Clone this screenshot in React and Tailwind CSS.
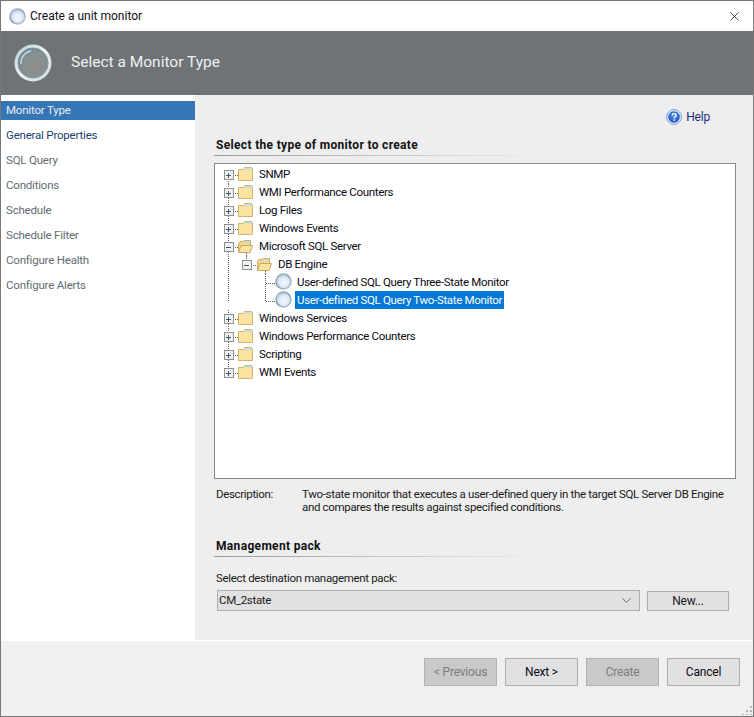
import React from 'react';
import { ChevronDown, X } from 'lucide-react';

const steps = ['General Properties', 'SQL Query', 'Conditions', 'Schedule', 'Schedule Filter', 'Configure Health', 'Configure Alerts'];

function MonitorIcon({ size = 18, id = 'a' }) {
  return (
    <svg width={size} height={size} viewBox="0 0 36 36" className="shrink-0">
      <defs>
        <linearGradient id={`ring-${id}`} x1="0" y1="0" x2="1" y2="1">
          <stop offset="0" stopColor="#9fb6c6" />
          <stop offset="0.5" stopColor="#8aa2b4" />
          <stop offset="1" stopColor="#c3d2dd" />
        </linearGradient>
        <radialGradient id={`core-${id}`} cx="0.55" cy="0.6" r="0.6">
          <stop offset="0" stopColor="#f4f7fc" />
          <stop offset="0.7" stopColor="#dfe9f6" />
          <stop offset="1" stopColor="#b7cde6" />
        </radialGradient>
      </defs>
      <circle cx="18" cy="18" r="17.5" fill={`url(#ring-${id})`} />
      <circle cx="18" cy="18" r="13.5" fill={`url(#core-${id})`} stroke="#dfe8ef" strokeWidth="1" />
    </svg>
  );
}

function HeaderIcon() {
  return (
    <svg width="38" height="38" viewBox="0 0 38 38" className="shrink-0">
      <defs>
        <linearGradient id="hring" x1="0" y1="0" x2="1" y2="1">
          <stop offset="0" stopColor="#b4cbd6" />
          <stop offset="0.5" stopColor="#eef3f5" />
          <stop offset="1" stopColor="#c7d3da" />
        </linearGradient>
        <radialGradient id="hcore" cx="0.62" cy="0.62" r="0.7">
          <stop offset="0" stopColor="#8f8d8c" />
          <stop offset="0.6" stopColor="#87908f" />
          <stop offset="1" stopColor="#6a8796" />
        </radialGradient>
      </defs>
      <circle cx="19" cy="19" r="18.5" fill="url(#hring)" />
      <circle cx="19" cy="19" r="15" fill="url(#hcore)" stroke="#7d929d" strokeWidth="1" />
      <path d="M7 20a12 12 0 0 1 10-13" fill="none" stroke="#c4d6de" strokeWidth="1.4" />
    </svg>
  );
}

function HelpIcon() {
  return (
    <svg width="16" height="16" viewBox="0 0 16 16" className="shrink-0">
      <defs>
        <radialGradient id="help" cx="0.5" cy="0.4" r="0.6">
          <stop offset="0" stopColor="#5b9cf0" />
          <stop offset="1" stopColor="#1f4fb8" />
        </radialGradient>
      </defs>
      <circle cx="8" cy="8" r="7.5" fill="#dbe6f7" stroke="#6f93d4" strokeWidth="0.8" />
      <circle cx="8" cy="8" r="5.8" fill="url(#help)" />
      <path d="M6 6.4c.2-1.2 1.1-1.7 2.1-1.7 1.2 0 2 .7 2 1.7 0 1.4-1.7 1.4-1.8 2.9" fill="none" stroke="#fff" strokeWidth="1.3" />
      <rect x="7.5" y="10.3" width="1.5" height="1.5" fill="#fff" />
    </svg>
  );
}

function Expander({ x, open }) {
  return (
    <g shapeRendering="crispEdges">
      <rect x={x - 4.5} y="4.5" width="9" height="9" fill="#f1f1f1" stroke="#8f8f8f" />
      <rect x={x - 2.5} y="8.5" width="5" height="1" fill="#3a5a80" />
      {!open && <rect x={x - 0.5} y="6.5" width="1" height="5" fill="#3a5a80" />}
    </g>
  );
}

function FolderClosed({ x }) {
  return (
    <g transform={`translate(${x} 0)`}>
      <path d="M0.5 3.5 V14.5 H14.5 V2.5 L13.5 1.5 H6.5 L5.5 3.5 Z" fill="#fbe3a0" stroke="#d6b46c" strokeLinejoin="round" />
      <path d="M7 2.2 H14 V4 H7 Z" fill="#bfe0f2" />
    </g>
  );
}

function FolderOpen({ x }) {
  return (
    <g transform={`translate(${x} 0)`}>
      <path d="M1.5 14.5 V5.5 L3 3.5 H6 L7 2.5 H13.5 V7" fill="#f3d78f" stroke="#c9a866" strokeLinejoin="round" />
      <path d="M8 3 H13 V5 H8 Z" fill="#bfe0f2" />
      <path d="M1.5 14.5 L4 7.5 H15.5 L13 14.5 Z" fill="#fbe3a0" stroke="#c9a866" strokeLinejoin="round" />
    </g>
  );
}

function Dots({ d }) {
  return <path d={d} fill="none" stroke="#5f5f5f" strokeDasharray="1 1" shapeRendering="crispEdges" />;
}

// one row of the tree, gutter drawn per row so the dotted trunk lines up
function TreeRow({ label, depth = 0, open, first, last, selected, iconId }) {
  const widths = [42, 61, 80];
  return (
    <div className="flex h-[18px] items-start">
      <svg width={widths[depth]} height="18" className="shrink-0 overflow-visible">
        <Dots d={`M13.5 ${first ? 9 : 0} V${last ? 9 : 18}`} />
        {depth === 0 && (
          <>
            <Dots d="M18 9.5 H23" />
            {open && <Dots d="M31.5 15 V18" />}
            <Expander x={13.5} open={open} />
            {open ? <FolderOpen x={22} /> : <FolderClosed x={23} />}
          </>
        )}
        {depth === 1 && (
          <>
            <Dots d="M31.5 0 V9" />
            <Dots d="M36 9.5 H42" />
            <Dots d="M50.5 15 V18" />
            <Expander x={31.5} open={open} />
            <FolderOpen x={41} />
          </>
        )}
        {depth === 2 && (
          <>
            <Dots d={`M50.5 0 V${last ? 9 : 18}`} />
            <Dots d="M51 9.5 H60" />
          </>
        )}
      </svg>
      {depth === 2 && (
        <div className="-ml-[20px] mr-[3px] -mt-[1px]">
          <MonitorIcon id={iconId} size={17} />
        </div>
      )}
      <div className={`-mt-[1px] h-[18px] px-[2px] leading-[18px] whitespace-nowrap ${selected ? 'bg-[#0078d7] text-white' : 'text-[#0a0a14]'}`}>
        {label}
      </div>
    </div>
  );
}

function SectionHeading({ children }) {
  return (
    <div className="ml-[19px]">
      <div className="h-[18px] pl-[2px] text-[12px] font-bold leading-[18px] tracking-[0.33px] text-[#111]">{children}</div>
      <div className="mt-[1px] h-[1px] w-[330px] bg-gradient-to-r from-[#9a9a9a] to-[#eeeeee]" />
    </div>
  );
}

function WizardButton({ children, disabled }) {
  return (
    <button
      disabled={disabled}
      className={`h-[28px] w-[73px] border text-[12px] tracking-[-0.2px] ${disabled ? 'border-[#b3b3b3] bg-[#c9c9c9] text-[#7d7d7d]' : 'border-[#adadad] bg-[#e1e1e1] text-[#0a0a14]'}`}
    >
      {children}
    </button>
  );
}

export default function App() {
  return (
    <div className="flex h-[717px] w-[754px] flex-col border border-[#777777] bg-[#f0f0f0] font-['Roboto',sans-serif] text-[11.5px] tracking-[-0.33px] text-[#1a1a1a]">
      <div className="flex h-[30px] shrink-0 items-center bg-white pl-[8px] pr-[11px]">
        <MonitorIcon id="title" size={17} />
        <span className="ml-[4px] text-[12px] tracking-[0] text-[#101018]">Create a unit monitor</span>
        <X className="ml-auto h-[15px] w-[15px] text-black" strokeWidth={1.1} />
      </div>
      <div className="flex h-[64px] shrink-0 items-center bg-[#6f7376] pl-[13px]">
        <HeaderIcon />
        <span className="ml-[19px] text-[15.5px] tracking-[0] text-[#eef0f0]">Select a Monitor Type</span>
      </div>
      <div className="flex min-h-0 flex-1">
        <div className="w-[194px] shrink-0 bg-white pt-[6px] tracking-[-0.2px]">
          <div className="mb-[6px] h-[19px] bg-[#3776b4] pl-[5px] leading-[18px] text-[#e4ecf6]">Monitor Type</div>
          {steps.map((step, i) => (
            <div key={step} className={`mb-[6px] h-[19px] pl-[5px] leading-[18px] ${i === 0 ? 'text-[#1a3f73]' : 'text-[#636b72]'}`}>
              {step}
            </div>
          ))}
        </div>
        <div className="min-w-0 flex-1 bg-[#eeeeee] pt-[13px]">
          <div className="flex h-[18px] items-center justify-end pr-[43px]">
            <HelpIcon />
            <span className="ml-[4px] text-[12px] tracking-[-0.2px] text-[#1a2a80]">Help</span>
          </div>
          <div className="mt-[10px]">
            <SectionHeading>Select the type of monitor to create</SectionHeading>
          </div>
          <div className="ml-[19px] mt-[7px] h-[316px] w-[522px] border border-[#828790] bg-white pt-[2px]">
            <TreeRow label="SNMP" first />
            <TreeRow label="WMI Performance Counters" />
            <TreeRow label="Log Files" />
            <TreeRow label="Windows Events" />
            <TreeRow label="Microsoft SQL Server" open />
            <TreeRow label="DB Engine" depth={1} open />
            <TreeRow label="User-defined SQL Query Three-State Monitor" depth={2} iconId="three" />
            <TreeRow label="User-defined SQL Query Two-State Monitor" depth={2} last selected iconId="two" />
            <TreeRow label="Windows Services" />
            <TreeRow label="Windows Performance Counters" />
            <TreeRow label="Scripting" />
            <TreeRow label="WMI Events" last />
          </div>
          <div className="ml-[21px] mt-[9px] flex leading-[13px]">
            <div className="w-[86px] shrink-0">Description:</div>
            <div className="w-[430px] whitespace-nowrap">
              Two-state monitor that executes a user-defined query in the target SQL Server DB Engine
              <br />
              and compares the results against specified conditions.
            </div>
          </div>
          <div className="mt-[23px]">
            <SectionHeading>Management pack</SectionHeading>
          </div>
          <div className="ml-[21px] mt-[13px] h-[16px] leading-[16px]">Select destination management pack:</div>
          <div className="ml-[22px] mt-[4px] flex items-start">
            <div className="flex h-[21px] w-[423px] items-center justify-between border border-[#adadad] bg-[#e1e1e1] pl-[1px] pr-[5px]">
              <span>CM_2state</span>
              <ChevronDown className="h-[15px] w-[15px] text-[#333]" strokeWidth={1.1} />
            </div>
            <button className="ml-[7px] mt-[1px] h-[20px] w-[82px] border border-[#adadad] bg-[#e1e1e1] text-[12px] tracking-[-0.2px]">New...</button>
          </div>
        </div>
      </div>
      <div className="relative flex h-[76px] shrink-0 items-start justify-end gap-[8px] border-t border-white pr-[13px] pt-[17px]">
        <WizardButton disabled>&lt; Previous</WizardButton>
        <WizardButton>Next &gt;</WizardButton>
        <WizardButton disabled>Create</WizardButton>
        <WizardButton>Cancel</WizardButton>
        <svg width="10" height="10" viewBox="0 0 10 10" className="absolute bottom-[1px] right-[1px]">
          <path d="M8 1h2v2H8zM4 5h2v2H4zM8 5h2v2H8zM0 9h2v1H0zM4 9h2v1H4zM8 9h2v1H8z" fill="#b5b5b5" />
        </svg>
      </div>
    </div>
  );
}
